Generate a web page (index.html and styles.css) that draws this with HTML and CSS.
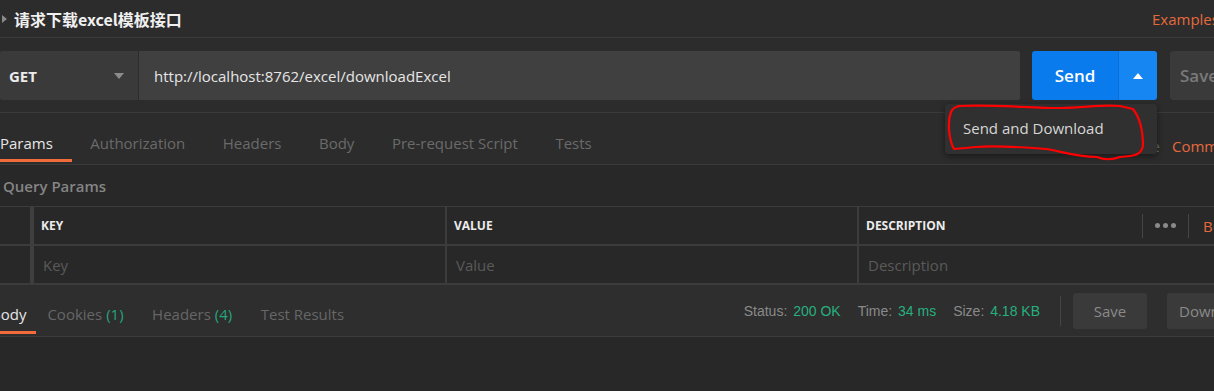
FILE: index.html
```html
<!DOCTYPE html>
<html lang="zh-CN">
<head>
    <meta charset="UTF-8">
    <meta name="viewport" content="width=device-width, initial-scale=1.0">
    <title>请求下载excel模板接口</title>
    <link rel="stylesheet" href="styles.css">
</head>
<body>
    <div class="app">
        <header class="title-bar">
            <h1><span class="caret"></span>请求下载excel模板接口</h1>
            <a class="link examples">Examples (0)</a>
        </header>

        <div class="request-row">
            <div class="method">GET <span class="arrow"></span></div>
            <div class="url">http://localhost:8762/excel/downloadExcel</div>
            <div class="send-group">
                <button class="send">Send</button>
                <button class="send-more"><span class="up"></span></button>
                <div class="send-menu">Send and Download</div>
            </div>
            <div class="save-col"><button class="save">Save</button></div>
        </div>

        <nav class="req-tabs">
            <div class="tabs-left">
                <a class="tab active">Params</a>
                <a class="tab">Authorization</a>
                <a class="tab">Headers</a>
                <a class="tab">Body</a>
                <a class="tab">Pre-request Script</a>
                <a class="tab">Tests</a>
                <span class="spacer"></span>
                <a class="side">Cookies</a>
                <a class="side">Code</a>
            </div>
            <div class="tabs-right"><a class="link">Comments (0)</a></div>
        </nav>

        <div class="query-label">Query Params</div>

        <div class="params-table">
            <div class="cell head first"></div>
            <div class="cell head">KEY</div>
            <div class="cell head">VALUE</div>
            <div class="cell head desc">DESCRIPTION</div>
            <div class="cell head actions">
                <span class="sep"></span>
                <span class="dots"><i></i><i></i><i></i></span>
                <span class="sep"></span>
                <a class="link bulk">Bulk Edit</a>
            </div>
            <div class="cell first"></div>
            <div class="cell ph">Key</div>
            <div class="cell ph">Value</div>
            <div class="cell ph wide">Description</div>
        </div>

        <div class="response-bar">
            <div class="res-left">
                <div class="res-tabs">
                    <a class="tab active">Body</a>
                    <a class="tab">Cookies <b>(1)</b></a>
                    <a class="tab">Headers <b>(4)</b></a>
                    <a class="tab">Test Results</a>
                </div>
                <div class="meta">
                    <span>Status: <b>200 OK</b></span>
                    <span>Time: <b>34 ms</b></span>
                    <span>Size: <b>4.18 KB</b></span>
                </div>
                <span class="divider"></span>
                <button class="btn">Save</button>
            </div>
            <div class="res-right"><button class="btn download">Download</button></div>
        </div>
    </div>

    <!-- red marker drawn over the screenshot -->
    <svg class="marker" viewBox="0 0 1214 391" width="1214" height="391">
        <path d="M957 106 C990 104 1030 108 1060 108 C1085 108 1100 104 1120 106 L1133 109 C1140 118 1143 132 1143 146 C1141 155 1135 156 1120 157 C1113 160 1103 160 1097 157 C1076 157 1056 150 1046 149 C1021 147 996 145 976 147 L954 149 C949 140 947 122 951 112 C953 108 955 107 960 106" />
    </svg>
</body>
</html>
```

FILE: styles.css
```css
body {
    margin: 0;
    background-color: #282828;
    font-family: "Open Sans", "Noto Sans CJK SC", sans-serif;
    color: #e0e0e0;
    overflow: hidden;
}
button {
    font-family: inherit;
    border: none;
    cursor: pointer;
}
.app {
    width: 1214px;
}
.link {
    color: #e5693c;
    white-space: nowrap;
}

/* title */
.title-bar {
    display: grid;
    grid-template-columns: 1fr 62px;
    align-items: center;
    height: 37px;
    background-color: #2c2c2c;
    border-bottom: 1px solid #3a3a3a;
}
.title-bar h1 {
    margin: 0;
    display: flex;
    align-items: center;
    font-size: 16px;
    font-weight: 700;
    color: #f0f0f0;
    font-family: "Noto Sans CJK SC", "Open Sans", sans-serif;
}
.caret {
    width: 0;
    height: 0;
    margin: 0 7px 0 2px;
    border-top: 4px solid transparent;
    border-bottom: 4px solid transparent;
    border-left: 5px solid #8a8a8a;
}
.examples {
    font-size: 15px;
}

/* request url row */
.request-row {
    display: flex;
    height: 49px;
    padding: 13px 0 12px;
    background-color: #2c2c2c;
    border-bottom: 1px solid #3a3a3a;
}
.method {
    width: 138px;
    display: flex;
    align-items: center;
    justify-content: space-between;
    padding: 0 14px 0 9px;
    box-sizing: border-box;
    background-color: #3a3a3a;
    border-radius: 2px 0 0 2px;
    font-size: 15px;
    font-weight: 700;
    color: #ececec;
}
.arrow {
    width: 0;
    height: 0;
    border-left: 5px solid transparent;
    border-right: 5px solid transparent;
    border-top: 6px solid #8c8c8c;
}
.url {
    flex: 1;
    margin-left: 1px;
    display: flex;
    align-items: center;
    padding-left: 15px;
    background-color: #404040;
    border-radius: 0 2px 2px 0;
    font-size: 15px;
    color: #e6e6e6;
}
.send-group {
    position: relative;
    display: flex;
    width: 125px;
    margin-left: 12px;
}
.send {
    width: 87px;
    background-color: #097bed;
    color: #fff;
    font-size: 17px;
    font-weight: 600;
    border-radius: 3px 0 0 3px;
    border-right: 1px solid #0b6ed4;
}
.send-more {
    flex: 1;
    background-color: #1586f2;
    border-radius: 0 3px 3px 0;
    display: flex;
    align-items: center;
    justify-content: center;
}
.up {
    width: 0;
    height: 0;
    border-left: 5px solid transparent;
    border-right: 5px solid transparent;
    border-bottom: 6px solid #fff;
}
.send-menu {
    position: absolute;
    top: 53px;
    right: 0;
    width: 212px;
    height: 50px;
    box-sizing: border-box;
    padding: 0 0 3px 18px;
    display: flex;
    align-items: center;
    background-color: #303030;
    box-shadow: 0 2px 6px rgba(0, 0, 0, 0.45);
    border-radius: 3px;
    font-size: 15px;
    color: #d6d6d6;
    z-index: 2;
}
.save-col {
    width: 44px;
    margin-left: 13px;
}
.save {
    width: 80px;
    height: 100%;
    background-color: #3a3a3a;
    color: #7a7a7a;
    font-size: 17px;
    font-weight: 600;
    text-align: left;
    padding-left: 10px;
    border-radius: 3px;
}

/* request tabs */
.req-tabs {
    display: grid;
    grid-template-columns: 1fr 42px;
    height: 51px;
    background-color: #2c2c2c;
    border-bottom: 1px solid #3a3a3a;
    font-size: 15px;
}
.tabs-left {
    display: flex;
    align-items: stretch;
}
.req-tabs .tab {
    display: flex;
    align-items: center;
    padding: 14px 19px 0 18.5px;
    color: #6a6a6a;
    border-bottom: 3px solid transparent;
    margin-bottom: 2px;
    white-space: nowrap;
}
.req-tabs .tab:first-child {
    padding-left: 0;
}
.req-tabs .tab.active {
    color: #e6e6e6;
    border-bottom-color: #f26b3a;
}
.spacer {
    flex: 1;
}
.side {
    display: flex;
    align-items: center;
    padding-top: 14px;
    margin-right: 12px;
    color: #6a6a6a;
}
.tabs-right {
    display: flex;
    align-items: center;
    padding-top: 14px;
}

.query-label {
    height: 41px;
    display: flex;
    align-items: center;
    padding-left: 3px;
    font-size: 15px;
    font-weight: 600;
    color: #858585;
}

/* params table */
.params-table {
    display: grid;
    grid-template-columns: 34px 413px 412px 283px 1fr;
    grid-template-rows: 39px 37px;
    border-top: 1px solid #3c3c3c;
    border-bottom: 2px solid #3c3c3c;
}
.cell {
    display: flex;
    align-items: center;
    padding-left: 7px;
    border-right: 2px solid #3c3c3c;
    font-size: 15px;
}
.cell.head {
    border-bottom: 2px solid #3c3c3c;
    font-size: 12px;
    font-weight: 700;
    color: #ececec;
}
.cell.first {
    padding: 0;
    border-right: 4px solid #3f3f3f;
}
.cell.desc {
    border-right: none;
}
.cell.ph {
    color: #5a5a5a;
    padding-left: 9px;
}
.cell.wide {
    grid-column: span 2;
    border-right: none;
}
.cell.actions {
    padding: 0;
    border-right: none;
    overflow: visible;
}
.sep {
    flex-shrink: 0;
    width: 1px;
    height: 24px;
    background-color: #454545;
}
.dots {
    flex-shrink: 0;
    width: 45px;
    display: flex;
    justify-content: center;
    gap: 3px;
}
.dots i {
    width: 5px;
    height: 5px;
    border-radius: 50%;
    background-color: #8a8a8a;
}
.bulk {
    margin-left: 14px;
    font-size: 15px;
    font-weight: 400;
}

/* response bar */
.response-bar {
    display: grid;
    grid-template-columns: 1fr 47px;
    height: 51px;
    background-color: #2e2e2e;
    border-bottom: 1px solid #3c3c3c;
}
.res-left {
    display: flex;
    align-items: center;
    padding-right: 20px;
}
.res-tabs {
    display: flex;
    align-self: stretch;
    margin-left: -20px;
    font-size: 15px;
}
.res-tabs .tab {
    display: flex;
    align-items: center;
    padding: 11px 11px 0;
    margin-right: 6.5px;
    color: #666;
    border-bottom: 3px solid transparent;
    margin-bottom: 2px;
    white-space: nowrap;
}
.res-tabs .tab b {
    font-weight: 400;
    color: #24a57a;
    margin-left: 4px;
}
.res-tabs .tab.active {
    color: #e6e6e6;
    border-bottom-color: #f26b3a;
    padding-right: 10px;
    margin-right: 0;
}
.meta {
    margin-left: auto;
    display: flex;
    gap: 17px;
    font-family: "Liberation Sans", Arial, sans-serif;
    font-size: 14px;
    color: #8a8a8a;
}
.meta b {
    font-weight: 400;
    color: #26b07f;
    margin-left: 2px;
}
.divider {
    width: 1px;
    height: 30px;
    margin: 0 12px 0 20px;
    background-color: #454545;
}
.btn {
    height: 36px;
    width: 74px;
    background-color: #3a3a3a;
    color: #8a8a8a;
    font-size: 15px;
    border-radius: 3px;
}
.res-right {
    display: flex;
    align-items: center;
}
.download {
    flex-shrink: 0;
    width: 100px;
    text-align: left;
    padding-left: 12px;
}

.marker {
    position: absolute;
    left: 0;
    top: 0;
    pointer-events: none;
    z-index: 3;
}
.marker path {
    fill: none;
    stroke: #f00;
    stroke-width: 2.2;
    stroke-linejoin: round;
}
```
